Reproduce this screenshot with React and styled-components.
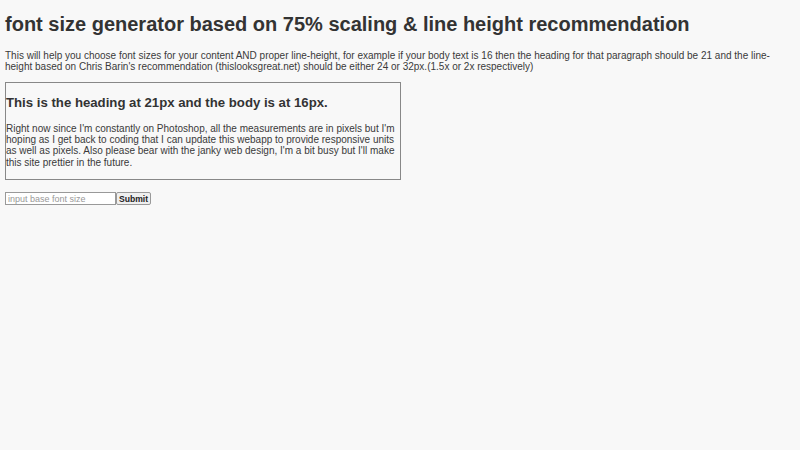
import styled, { createGlobalStyle } from 'styled-components'

const Global = createGlobalStyle`
  html, body {
    margin: 0;
    background: #f8f8f8;
  }
  body {
    padding: 5px;
    font-family: "Liberation Sans", Arial, sans-serif;
    font-size: 10px;
    color: #3a3a3a;
  }
`

const Title = styled.h1`
  font-size: 20px;
  line-height: 23px;
  font-weight: bold;
  color: #333;
  margin: 8px 0 14px;
`

const Intro = styled.p`
  margin: 0 0 9px;
  font-size: 10px;
  line-height: 11.3px;
`

const Preview = styled.div`
  width: 394px;
  border: 1px solid #888;
  padding: 0 0 11px;
`

const PreviewHeading = styled.h2`
  font-size: 13.2px;
  line-height: 15px;
  font-weight: bold;
  color: #333;
  margin: 12px 0 13px;
`

const PreviewBody = styled.p`
  margin: 0;
  font-size: 10px;
  line-height: 11.4px;
`

const Form = styled.form`
  display: flex;
  margin-top: 12px;
`

const SizeInput = styled.input`
  width: 105px;
  height: 9px;
  padding: 1px 2px;
  font-family: inherit;
  font-size: 9px;
  border: 1px solid #999;
  background: #fff;
  &::placeholder {
    color: #999;
  }
`

const SubmitBtn = styled.button`
  font-family: inherit;
  font-size: 8.6px;
  font-weight: bold;
  padding: 0 2px;
  height: 13px;
  border: 1px solid #999;
  border-radius: 2px;
  background: #efefef;
  color: #222;
`

export default function App() {
  return (
    <>
      <Global />
      <Title>font size generator based on 75% scaling &amp; line height recommendation</Title>
      <Intro>
        This will help you choose font sizes for your content AND proper line-height, for example if your body text is 16 then the heading for that paragraph should be 21 and the line-height based on Chris Barin's recommendation (thislooksgreat.net) should be either 24 or 32px.(1.5x or 2x respectively)
      </Intro>
      <Preview>
        <PreviewHeading>This is the heading at 21px and the body is at 16px.</PreviewHeading>
        <PreviewBody>
          Right now since I'm constantly on Photoshop, all the measurements are in pixels but I'm hoping as I get back to coding that I can update this webapp to provide responsive units as well as pixels. Also please bear with the janky web design, I'm a bit busy but I'll make this site prettier in the future.
        </PreviewBody>
      </Preview>
      <Form onSubmit={e => e.preventDefault()}>
        <SizeInput placeholder='input base font size' />
        <SubmitBtn type='submit'>Submit</SubmitBtn>
      </Form>
    </>
  )
}
